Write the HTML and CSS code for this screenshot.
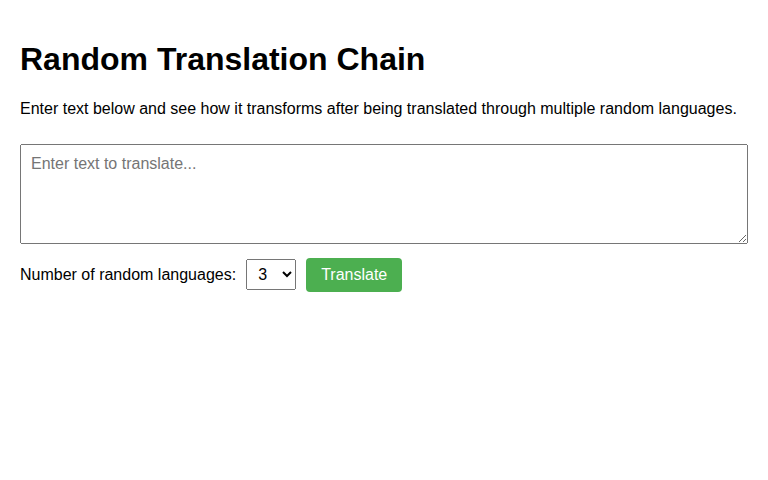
FILE: index.html
```html
<!DOCTYPE html>
<html>
<head>
  <title>Random Translation Chain</title>
  <link rel="stylesheet" href="styles.css">
</head>
<body>
  <h1>Random Translation Chain</h1>
  <p>Enter text below and see how it transforms after being translated through multiple random languages.</p>

  <!-- Input text -->
  <textarea id="inputText" class="input-text" placeholder="Enter text to translate..."></textarea>

  <!-- Controls -->
  <div class="controls">
    <label for="numLanguages">Number of random languages:</label>
    <select id="numLanguages" class="lang-select">
      <option>1</option>
      <option>2</option>
      <option selected>3</option>
      <option>4</option>
      <option>5</option>
    </select>
    <button id="translateButton" class="translate-button">Translate</button>
  </div>

  <div id="results"></div>
</body>
</html>
```

FILE: styles.css
```css
body {
  font-family: "Liberation Sans", Arial, sans-serif;
  margin: 0;
  padding: 20px;
}
h1 {
  font-size: 32px;
}
.input-text {
  display: block;
  box-sizing: border-box;
  width: 100%;
  height: 100px;
  margin: 26px 0 14px;
  padding: 10px;
  font-family: "Liberation Sans", Arial, sans-serif;
  font-size: 16px;
}
.controls {
  display: flex;
  align-items: center;
  gap: 10px;
  font-size: 16px;
}
.lang-select {
  font-family: "Liberation Sans", Arial, sans-serif;
  font-size: 16px;
  padding: 5px 12px 5px 7px;
}
.translate-button {
  background-color: #4CAF50;
  color: #fff;
  border: none;
  border-radius: 4px;
  padding: 8px 15px;
  font-family: "Liberation Sans", Arial, sans-serif;
  font-size: 16px;
  cursor: pointer;
}
```
